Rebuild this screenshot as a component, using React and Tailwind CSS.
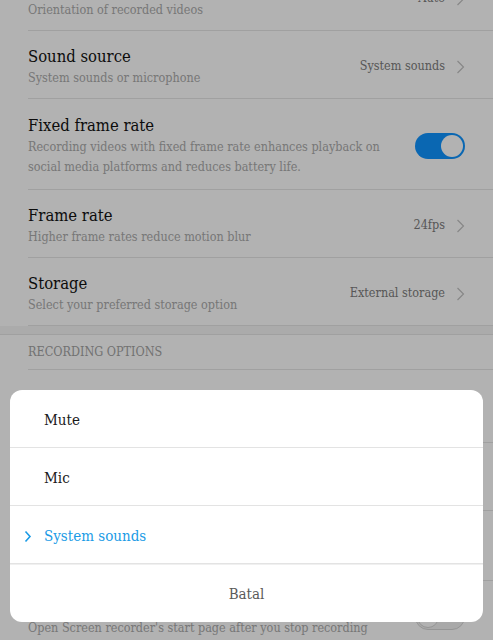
const font = { fontFamily: '"DejaVu Serif Condensed", "DejaVu Serif", serif' };

function Chevron() {
  return (
    <svg width="9" height="14" viewBox="0 0 9 14" className="shrink-0">
      <path d="M1.5 1 L7.5 7 L1.5 13" fill="none" stroke="#c2c2c2" strokeWidth="1.2" />
    </svg>
  );
}

function Toggle({ on }) {
  return (
    <div
      className={`relative h-[26px] w-[50px] shrink-0 rounded-full ${on ? 'bg-[#0f94ff]' : 'border border-[#d6d6d6] bg-[#f2f2f2]'}`}
    >
      <div
        className={`absolute h-[22px] w-[22px] rounded-full bg-white ${on ? 'right-[2px] top-[2px]' : 'left-[1px] top-[1px] border border-[#d6d6d6]'}`}
      />
    </div>
  );
}

function Row({ title, desc, value, toggle, tall, extraTop }) {
  return (
    <div
      className={`ml-[28px] flex items-center border-b border-[#e6e6e6] pr-[28px] ${tall ? 'pt-[16px] pb-[12px]' : extraTop ? 'pt-[19px] pb-[12px]' : 'pt-[15px] pb-[11px]'}`}
    >
      <div className="min-w-0 flex-1">
        <div className="text-[16.5px] leading-[22px] text-[#121212]">{title}</div>
        <div
          className={`text-[12.5px] text-[#ababab] ${tall ? 'pr-[6px] leading-[20px]' : 'pr-[20px] leading-[19px]'}`}
        >
          {desc}
        </div>
      </div>
      {value && (
        <div className="flex items-center gap-[11px] text-[12.5px] text-[#7d7d7d]">
          <span>{value}</span>
          <Chevron />
        </div>
      )}
      {toggle !== undefined && <Toggle on={toggle} />}
    </div>
  );
}

export default function App() {
  const options = ['Mute', 'Mic', 'System sounds'];
  const selected = 'System sounds';

  return (
    <div style={font} className="relative h-[640px] w-full overflow-hidden bg-white">
      <div className="-mt-[37px]">
        <Row title="Orientation" desc="Orientation of recorded videos" value="Auto" />
        <Row title="Sound source" desc="System sounds or microphone" value="System sounds" />
        <Row
          title="Fixed frame rate"
          desc="Recording videos with fixed frame rate enhances playback on social media platforms and reduces battery life."
          toggle={true}
          tall
        />
        <Row title="Frame rate" desc="Higher frame rates reduce motion blur" value="24fps" />
        <Row title="Storage" desc="Select your preferred storage option" value="External storage" />

        <div className="h-[9px] border-b border-[#e6e6e6] bg-[#f5f5f5]" />
        <div className="ml-[28px] border-b border-[#e6e6e6] py-[7px] text-[12.5px] leading-[20px] text-[#a3a3a3]">
          RECORDING OPTIONS
        </div>

        <Row title="Show touch gestures" desc="Show visual feedback for taps and swipes" toggle={false} extraTop />
        <div className="pb-[2px]">
          <Row title="Show button taps" desc="Highlight navigation buttons when pressed" toggle={false} />
        </div>
        <Row title="Lock screen to end" desc="Stop recording when the screen is locked" toggle={false} />
        <Row
          title="Open start page"
          desc="Open Screen recorder's start page after you stop recording"
          toggle={false}
        />
      </div>

      <div className="absolute inset-0 bg-black/30" />

      <div className="absolute left-[10px] right-[10px] top-[390px] overflow-hidden rounded-[12px] bg-white">
        {options.map((opt) => {
          const active = opt === selected;
          return (
            <div
              key={opt}
              className="relative flex h-[58px] items-center border-b border-[#e3e3e3] pl-[34px] pt-[3px] text-[15px]"
            >
              {active && (
                <svg width="8" height="13" viewBox="0 0 8 13" className="absolute left-[14px] top-[24px]">
                  <path d="M1.5 1.5 L6 6.5 L1.5 11.5" fill="none" stroke="#1a9be6" strokeWidth="1.6" />
                </svg>
              )}
              <span className={active ? 'text-[#1a9be6]' : 'text-[#1a1a1a]'}>{opt}</span>
            </div>
          );
        })}
        <div className="flex h-[58px] items-center justify-center border-t border-[#f0f0f0] pt-[1px] text-[15px] text-[#5a5a5a]">
          Batal
        </div>
      </div>
    </div>
  );
}
